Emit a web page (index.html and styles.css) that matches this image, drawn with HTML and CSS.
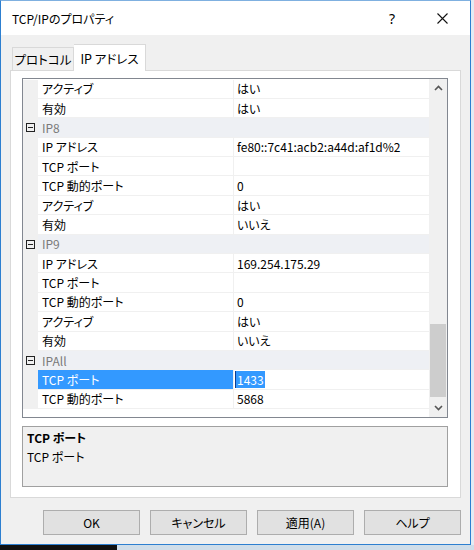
FILE: index.html
```html
<!DOCTYPE html>
<html lang="ja">
<head>
    <meta charset="UTF-8">
    <title>TCP/IPのプロパティ</title>
    <link rel="stylesheet" href="styles.css">
</head>
<body>

    <!-- Dialog window -->
    <div class="window">
        <div class="titlebar">
            <div class="title">TCP/IPのプロパティ</div>
            <div class="caption-btn help">?</div>
            <div class="caption-btn close">
                <svg width="11" height="11" viewBox="0 0 11 11">
                    <path d="M0.5 0.5 L10.5 10.5 M10.5 0.5 L0.5 10.5" stroke="#111" stroke-width="1.1" fill="none"/>
                </svg>
            </div>
        </div>

        <div class="dialog">
            <!-- Tabs -->
            <div class="tabs">
                <div class="tab">プロトコル</div>
                <div class="tab selected">IP アドレス</div>
            </div>

            <div class="panel">
                <!-- Property grid -->
                <div class="grid">
                    <div class="rows">
                        <div class="row"><div class="gutter"></div><div class="name">アクティブ</div><div class="value">はい</div></div>
                        <div class="row"><div class="gutter"></div><div class="name">有効</div><div class="value">はい</div></div>
                        <div class="row category"><div class="gutter"><span class="toggle"></span></div><div class="name">IP8</div></div>
                        <div class="row"><div class="gutter"></div><div class="name">IP アドレス</div><div class="value">fe80::7c41:acb2:a44d:af1d%2</div></div>
                        <div class="row"><div class="gutter"></div><div class="name">TCP ポート</div><div class="value"></div></div>
                        <div class="row"><div class="gutter"></div><div class="name">TCP 動的ポート</div><div class="value">0</div></div>
                        <div class="row"><div class="gutter"></div><div class="name">アクティブ</div><div class="value">はい</div></div>
                        <div class="row"><div class="gutter"></div><div class="name">有効</div><div class="value">いいえ</div></div>
                        <div class="row category"><div class="gutter"><span class="toggle"></span></div><div class="name">IP9</div></div>
                        <div class="row"><div class="gutter"></div><div class="name">IP アドレス</div><div class="value">169.254.175.29</div></div>
                        <div class="row"><div class="gutter"></div><div class="name">TCP ポート</div><div class="value"></div></div>
                        <div class="row"><div class="gutter"></div><div class="name">TCP 動的ポート</div><div class="value">0</div></div>
                        <div class="row"><div class="gutter"></div><div class="name">アクティブ</div><div class="value">はい</div></div>
                        <div class="row"><div class="gutter"></div><div class="name">有効</div><div class="value">いいえ</div></div>
                        <div class="row category"><div class="gutter"><span class="toggle"></span></div><div class="name">IPAll</div></div>
                        <div class="row active"><div class="gutter"></div><div class="name">TCP ポート</div><div class="value"><span class="edit">1433</span></div></div>
                        <div class="row"><div class="gutter"></div><div class="name">TCP 動的ポート</div><div class="value">5868</div></div>
                    </div>

                    <!-- Scrollbar -->
                    <div class="scrollbar">
                        <div class="arrow">
                            <svg width="9" height="6" viewBox="0 0 9 6"><path d="M1 5 L4.5 1.5 L8 5" stroke="#555" stroke-width="1.6" fill="none"/></svg>
                        </div>
                        <div class="track"><div class="thumb"></div></div>
                        <div class="arrow">
                            <svg width="9" height="6" viewBox="0 0 9 6"><path d="M1 1 L4.5 4.5 L8 1" stroke="#555" stroke-width="1.6" fill="none"/></svg>
                        </div>
                    </div>
                </div>

                <!-- Description -->
                <div class="desc">
                    <div class="desc-title">TCP ポート</div>
                    <div class="desc-text">TCP ポート</div>
                </div>
            </div>

            <!-- Buttons -->
            <div class="buttons">
                <div class="btn">OK</div>
                <div class="btn">キャンセル</div>
                <div class="btn">適用(A)</div>
                <div class="btn">ヘルプ</div>
            </div>
        </div>
    </div>

    <div class="taskbar"></div>

</body>
</html>
```

FILE: styles.css
```css
/* General */
body {
    margin: 0;
    background: #e4ecf4;
    font-family: "Noto Sans CJK JP", "Noto Sans", sans-serif;
    font-size: 12px;
    font-feature-settings: "palt";
    color: #000;
}

/* Window */
.window {
    width: 471px;
    height: 545px;
    box-sizing: border-box;
    border: 1px solid #2d7fd0;
    border-top-color: #7fb0e0;
    background: #f0f0f0;
    display: flex;
    flex-direction: column;
}

.titlebar {
    height: 34px;
    background: #fff;
    display: flex;
    align-items: center;
    padding-right: 3px;
}

.title {
    flex: 1;
    padding-left: 11px;
    font-size: 12px;
}

.caption-btn {
    width: 50px;
    height: 34px;
    display: flex;
    align-items: center;
    justify-content: center;
}

.help {
    font-size: 14px;
    font-family: "Noto Sans", sans-serif;
}

/* Dialog body */
.dialog {
    flex: 1;
    display: flex;
    flex-direction: column;
    padding: 9px 9px 0 9px;
}

.tabs {
    display: flex;
    align-items: flex-end;
    padding-left: 2px;
    height: 27px;
    position: relative;
    z-index: 1;
}

.tab {
    box-sizing: border-box;
    width: 62px;
    height: 23px;
    display: flex;
    align-items: center;
    justify-content: center;
    white-space: nowrap;
    border: 1px solid #d9d9d9;
    border-bottom: none;
    background: #f0f0f0;
    margin-bottom: 1px;
    font-size: 12.5px;
}

.tab.selected {
    width: 72px;
    height: 27px;
    margin-bottom: 0;
    background: #fff;
    border-left: none;
}

.panel {
    background: #fff;
    border: 1px solid #d9d9d9;
    margin-top: -1px;
    padding: 7px 12px 10px 11px;
}

/* Property grid */
.grid {
    display: flex;
    border: 1px solid #828790;
    height: 338px;
}

.rows {
    flex: 1;
    padding-top: 0.5px;
}

.row {
    display: flex;
    height: 19.4px;
}

.gutter {
    width: 15px;
    background: #f0f0f0;
    display: flex;
    align-items: center;
    justify-content: center;
}

.name {
    width: 191px;
    padding-left: 4px;
    border-right: 1px solid #f0f0f0;
    border-bottom: 1px solid #f0f0f0;
    display: flex;
    align-items: center;
    white-space: nowrap;
}

.value {
    flex: 1;
    padding-left: 3px;
    border-bottom: 1px solid #f0f0f0;
    display: flex;
    align-items: center;
    white-space: nowrap;
}

.row.category .name {
    flex: 1;
    background: #eef0f4;
    color: #7a7a7a;
    border-right: none;
}

.toggle {
    width: 7px;
    height: 7px;
    border: 1px solid #222;
    position: relative;
}

.toggle::after {
    content: "";
    position: absolute;
    left: 1px;
    right: 1px;
    top: 3px;
    height: 1px;
    background: #222;
}

.row.active .name {
    background: #3399ff;
    color: #fff;
}

.edit {
    background: #3399ff;
    color: #fff;
    padding: 0 1px;
    margin-left: -2px;
    border-left: 1px solid #0b3d91;
}

/* Scrollbar */
.scrollbar {
    width: 18px;
    background: #f0f0f0;
    display: flex;
    flex-direction: column;
}

.arrow {
    height: 18px;
    display: flex;
    align-items: center;
    justify-content: center;
}

.track {
    flex: 1;
    display: flex;
    flex-direction: column;
    justify-content: flex-end;
    padding: 0 1px 2px 1px;
}

.thumb {
    height: 73px;
    background: #cdcdcd;
}

/* Description */
.desc {
    margin-top: 8px;
    height: 59px;
    background: #f0f0f0;
    border: 1px solid #a0a0a0;
    padding: 0 4px;
}

.desc-title {
    font-weight: bold;
    margin-top: 1px;
    line-height: 19px;
}

.desc-text {
    line-height: 19px;
}

/* Buttons */
.buttons {
    display: flex;
    justify-content: flex-end;
    gap: 10px;
    margin-top: 12px;
}

.btn {
    width: 95px;
    height: 23px;
    background: #e1e1e1;
    border: 1px solid #adadad;
    display: flex;
    align-items: center;
    justify-content: center;
}

.taskbar {
    height: 5px;
    background: linear-gradient(to right, #111 117px, #cfdde9 117px);
}
```
